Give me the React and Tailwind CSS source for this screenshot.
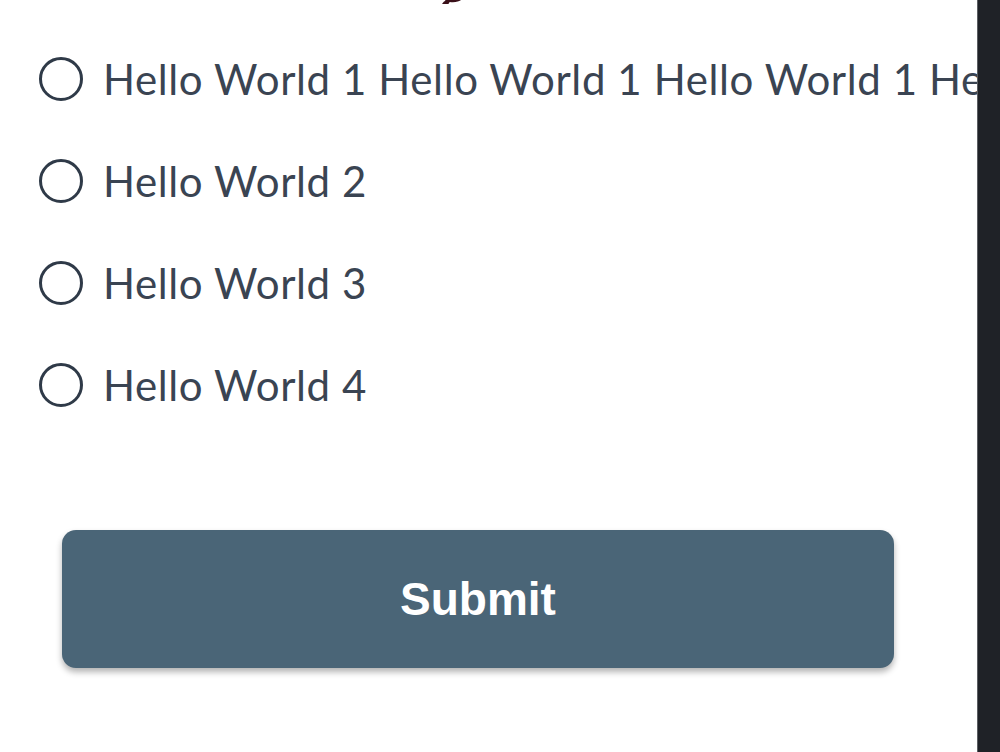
import React from "react";

const options = [
  "Hello World 1 Hello World 1 Hello World 1 Hello World 1",
  "Hello World 2",
  "Hello World 3",
  "Hello World 4",
];

export default function App() {
  return (
    <div className="flex h-[752px] w-[1000px] overflow-hidden bg-white">
      <div className="w-[977px] shrink-0 overflow-hidden">
        {/* tail of the heading that sits above the viewport */}
        <div className="flex h-[4px] items-end overflow-hidden pl-[438px]">
          <span className="text-[60px] font-black leading-[0.42] text-[#3a1019]" style={{ fontFamily: "Lato, sans-serif" }}>
            g
          </span>
        </div>

        <div className="flex flex-col gap-[58px] pl-[39px] pt-[53px]">
          {options.map((label, i) => (
            <label key={i} className="flex items-center gap-[20px] whitespace-nowrap">
              <span className="h-[44px] w-[44px] shrink-0 rounded-full border-[3px] border-[#2f3a48]" />
              <span
                className="text-[42px] leading-[44px] tracking-[0.6px] text-[#3a4452]"
                style={{ fontFamily: "Lato, sans-serif" }}
              >
                {label}
              </span>
            </label>
          ))}
        </div>

        <button
          className="ml-[62px] mt-[123px] flex h-[138px] w-[832px] items-center justify-center rounded-[14px] bg-[#4a6577] text-[46px] font-bold text-white shadow-[0_4px_6px_rgba(0,0,0,0.3)]"
          style={{ fontFamily: '"Liberation Sans", Arial, sans-serif' }}
        >
          Submit
        </button>
      </div>
      <div className="w-[23px] shrink-0 border-l border-[#5c5f63] bg-[#1f2227]" />
    </div>
  );
}
